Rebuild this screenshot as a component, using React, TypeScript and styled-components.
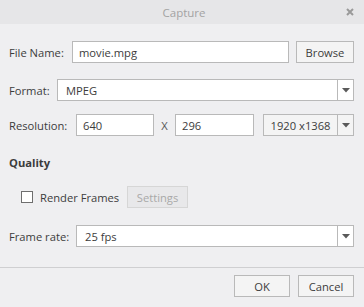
import React from "react";
import styled, { createGlobalStyle } from "styled-components";

const GlobalStyle = createGlobalStyle`
  html, body {
    margin: 0;
    padding: 0;
    background: #efeff1;
  }
  body {
    font-family: "Open Sans", "Noto Sans", sans-serif;
    font-size: 11.2px;
    color: #3c3c3c;
  }
`;

function App() {
  return (
    <>
      <GlobalStyle />
      <Dialog>
        <TitleBar>
          <Title>Capture</Title>
          <CloseIcon viewBox="0 0 8 8">
            <path d="M1 1 L7 7 M7 1 L1 7" stroke="#9a9a9a" strokeWidth="2" />
          </CloseIcon>
        </TitleBar>

        <Body>
          <Row $top={17}>
            <Label $width={63}>File Name:</Label>
            <TextInput $grow defaultValue="movie.mpg" />
            <Button $width={58} $ml={7}>Browse</Button>
          </Row>

          <Row $top={16}>
            <Label $width={48}>Format:</Label>
            <Select $grow>
              <SelectValue>MPEG</SelectValue>
              <Arrow />
            </Select>
          </Row>

          <Row $top={13}>
            <Label $width={67}>Resolution:</Label>
            <TextInput $width={78} defaultValue="640" />
            <Times>X</Times>
            <TextInput $width={79} defaultValue="296" />
            <Select $width={91} $ml={9} $muted>
              <SelectValue $center>1920 x1368</SelectValue>
              <Arrow />
            </Select>
          </Row>

          <SectionTitle>Quality</SectionTitle>

          <CheckRow>
            <CheckBox />
            <CheckLabel>Render Frames</CheckLabel>
            <Button $width={61} $disabled>Settings</Button>
          </CheckRow>

          <Row $top={17}>
            <Label $width={67}>Frame rate:</Label>
            <Select $grow>
              <SelectValue>25 fps</SelectValue>
              <Arrow />
            </Select>
          </Row>
        </Body>

        <Footer>
          <Button $width={56}>OK</Button>
          <Button $width={56}>Cancel</Button>
        </Footer>
      </Dialog>
    </>
  );
}

function Arrow() {
  return (
    <ArrowBox>
      <svg width="8" height="5" viewBox="0 0 8 5">
        <path d="M0 0 H8 L4 4.5 Z" fill="#5a5a5a" />
      </svg>
    </ArrowBox>
  );
}

const Dialog = styled.div`
  width: 364px;
  height: 307px;
  display: flex;
  flex-direction: column;
  background: #efeff1;
  overflow: hidden;
`;

const TitleBar = styled.div`
  height: 24px;
  background: #e6e6e8;
  display: flex;
  align-items: center;
  justify-content: center;
  position: relative;
`;

const Title = styled.div`
  color: #a3a3a3;
  font-size: 11.5px;
  margin-left: 4px;
`;

const CloseIcon = styled.svg`
  position: absolute;
  right: 10px;
  top: 8px;
  width: 8px;
  height: 8px;
`;

const Body = styled.div`
  padding: 0 10px 0 9px;
  display: flex;
  flex-direction: column;
`;

const Row = styled.div<{ $top: number }>`
  display: flex;
  align-items: center;
  height: 22px;
  margin-top: ${(p) => p.$top}px;
`;

const Label = styled.div<{ $width: number }>`
  width: ${(p) => p.$width}px;
  flex-shrink: 0;
  white-space: nowrap;
`;

const TextInput = styled.input<{ $grow?: boolean; $width?: number }>`
  box-sizing: border-box;
  height: 22px;
  ${(p) => (p.$grow ? "flex: 1;" : `width: ${p.$width}px;`)}
  min-width: 0;
  border: 1px solid #b9b9b9;
  background: #ffffff;
  padding: 0 6px;
  font-family: inherit;
  font-size: 11.2px;
  color: #3c3c3c;
  outline: none;
  margin: 0;
`;

const Times = styled.div`
  width: 21px;
  text-align: center;
  color: #555;
`;

const Button = styled.div<{ $width: number; $ml?: number; $disabled?: boolean }>`
  box-sizing: border-box;
  width: ${(p) => p.$width}px;
  height: 22px;
  margin-left: ${(p) => p.$ml ?? 0}px;
  display: flex;
  align-items: center;
  justify-content: center;
  border: 1px solid ${(p) => (p.$disabled ? "#d6d6d6" : "#b9b9b9")};
  background: ${(p) => (p.$disabled ? "#e8e8ea" : "#f4f4f4")};
  color: ${(p) => (p.$disabled ? "#a8a8a8" : "#3c3c3c")};
  flex-shrink: 0;
`;

const Select = styled.div<{
  $grow?: boolean;
  $width?: number;
  $ml?: number;
  $muted?: boolean;
}>`
  box-sizing: border-box;
  height: 22px;
  ${(p) => (p.$grow ? "flex: 1;" : `width: ${p.$width}px;`)}
  margin-left: ${(p) => p.$ml ?? 0}px;
  display: flex;
  border: 1px solid #b9b9b9;
  background: ${(p) => (p.$muted ? "#f4f4f4" : "#ffffff")};
`;

const SelectValue = styled.div<{ $center?: boolean }>`
  flex: 1;
  display: flex;
  align-items: center;
  justify-content: ${(p) => (p.$center ? "center" : "flex-start")};
  padding-left: ${(p) => (p.$center ? 0 : 8)}px;
  white-space: nowrap;
`;

const ArrowBox = styled.div`
  width: 15px;
  border-left: 1px solid #b9b9b9;
  display: flex;
  align-items: center;
  justify-content: center;
`;

const SectionTitle = styled.div`
  font-weight: 700;
  margin-top: 18px;
  height: 18px;
  line-height: 18px;
`;

const CheckRow = styled.div`
  display: flex;
  align-items: center;
  height: 22px;
  margin-top: 14px;
  padding-left: 12px;
`;

const CheckBox = styled.div`
  box-sizing: border-box;
  width: 12px;
  height: 12px;
  border: 1px solid #6e6e6e;
  background: #ffffff;
`;

const CheckLabel = styled.div`
  margin-left: 7px;
  margin-right: 9px;
  width: 78px;
  white-space: nowrap;
`;

const Footer = styled.div`
  margin-top: 20px;
  border-top: 1px solid #cfcfd1;
  padding: 7px 10px 0 0;
  display: flex;
  justify-content: flex-end;
  gap: 8px;
`;

export default App;
